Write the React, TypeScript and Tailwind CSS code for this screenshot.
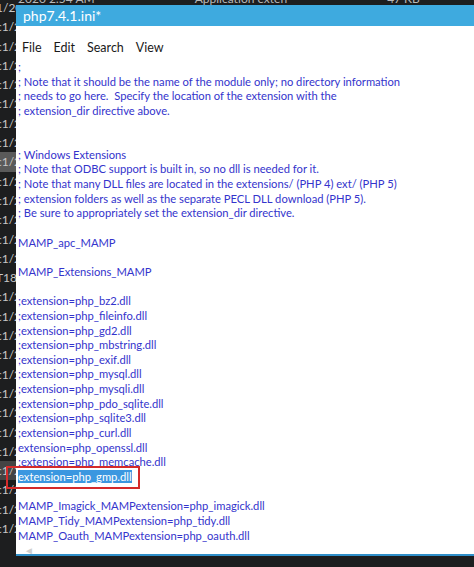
const bgRows = [
  '1/2020 2:54 AM',
  'c1/2', 'c1/2', 'c1/2', 'c1/2', 'c1/2', 'c1/2', 'c1/2', 'c1/2',
  'c1/2', 'c1/2', 'c1/2', 'c1/2', 'c1/2', 'T18/', 'c1/2', 'c1/2',
  'c1/2', 'c1/2', 'c1/2', 'c1/2', 'c1/2', 'c1/2', 'c1/2', 'c1/2',
  'c1/2', 'c1/2', 'c1/2',
];

type Line = { text: string; selected?: boolean };

const lines: Line[] = [
  { text: ';' },
  { text: '; Note that it should be the name of the module only; no directory information' },
  { text: '; needs to go here.  Specify the location of the extension with the' },
  { text: '; extension_dir directive above.' },
  { text: '' },
  { text: '' },
  { text: '; Windows Extensions' },
  { text: '; Note that ODBC support is built in, so no dll is needed for it.' },
  { text: '; Note that many DLL files are located in the extensions/ (PHP 4) ext/ (PHP 5)' },
  { text: '; extension folders as well as the separate PECL DLL download (PHP 5).' },
  { text: '; Be sure to appropriately set the extension_dir directive.' },
  { text: '' },
  { text: 'MAMP_apc_MAMP' },
  { text: '' },
  { text: 'MAMP_Extensions_MAMP' },
  { text: '' },
  { text: ';extension=php_bz2.dll' },
  { text: ';extension=php_fileinfo.dll' },
  { text: ';extension=php_gd2.dll' },
  { text: ';extension=php_mbstring.dll' },
  { text: ';extension=php_exif.dll' },
  { text: ';extension=php_mysql.dll' },
  { text: ';extension=php_mysqli.dll' },
  { text: ';extension=php_pdo_sqlite.dll' },
  { text: ';extension=php_sqlite3.dll' },
  { text: ';extension=php_curl.dll' },
  { text: 'extension=php_openssl.dll' },
  { text: ';extension=php_memcache.dll' },
  { text: 'extension=php_gmp.dll', selected: true },
  { text: '' },
  { text: 'MAMP_Imagick_MAMPextension=php_imagick.dll' },
  { text: 'MAMP_Tidy_MAMPextension=php_tidy.dll' },
  { text: 'MAMP_Oauth_MAMPextension=php_oauth.dll' },
];

export default function App() {
  return (
    <div
      className="relative h-[567px] w-[474px] overflow-hidden bg-[#1d1e1f]"
      style={{ fontFamily: 'Lato, "Open Sans", sans-serif' }}
    >
      {/* explorer rows behind the window */}
      <div className="absolute left-0 top-[-2px] flex w-[16px] flex-col overflow-hidden text-[12px] leading-[19.3px] text-[#c8c8c8]">
        {bgRows.map((r, i) => (
          <div
            key={i}
            className={`overflow-hidden whitespace-nowrap ${i === 8 ? 'bg-[#5a5a5a]' : ''} ${i === 24 ? 'bg-[#444]' : ''}`}
          >
            <span className="ml-[-4px]">{r}</span>
          </div>
        ))}
      </div>
      <div className="absolute left-[16px] top-0 h-[5px] w-[458px] overflow-hidden">
        <div className="mt-[-7px] flex gap-[100px] pl-[2px] text-[12px] leading-[12px] text-[#b8b8b8]">
          <span>2020 2:54 AM</span>
          <span>Application exten</span>
          <span>47 KB</span>
        </div>
      </div>

      {/* notepad window */}
      <div className="absolute left-[16px] top-[5px] flex h-[551px] w-[470px] flex-col border-b-2 border-[#2f8fc9] bg-white">
        <div className="flex h-[27px] items-center bg-[#3eaadf] pl-[7px] text-[14px] text-white">
          php7.4.1.ini*
        </div>
        <div className="flex h-[31px] items-center gap-[12px] pl-[6px] pt-[13px] text-[12.5px] text-[#1a1a1a]">
          <span>File</span>
          <span>Edit</span>
          <span>Search</span>
          <span>View</span>
        </div>
        <div className="flex flex-col pl-[2px] pt-[3px] text-[11.2px] leading-[14.65px] text-[#3434cc]">
          {lines.map((l, i) => (
            <div key={i} className="h-[14.65px] whitespace-pre">
              {l.selected ? (
                <span className="bg-[#3b97e0] text-white">{l.text}</span>
              ) : (
                l.text
              )}
            </div>
          ))}
        </div>
        <div className="mt-auto mb-[2px] pl-[8px] text-[10px] text-[#d0d0d0]">◄</div>
      </div>

      {/* red highlight box */}
      <div className="absolute left-[6px] top-[466px] h-[23px] w-[134px] border-2 border-[#d42a2a]" />
    </div>
  );
}
